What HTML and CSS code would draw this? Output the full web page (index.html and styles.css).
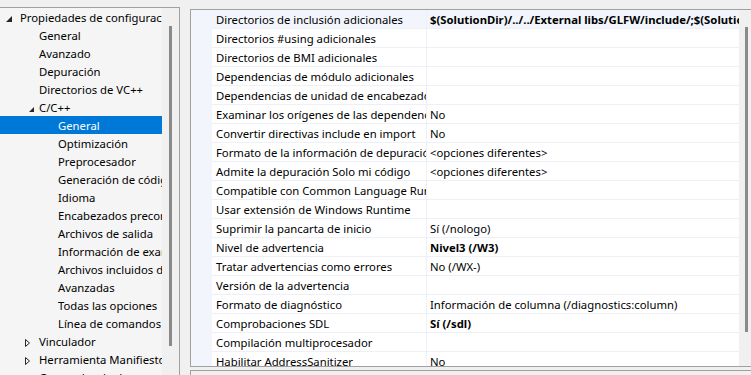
FILE: index.html
```html
<!DOCTYPE html>
<html lang="es">
<head>
    <meta charset="UTF-8">
    <meta name="viewport" content="width=device-width, initial-scale=1.0">
    <title>Páginas de propiedades</title>
    <link rel="stylesheet" href="styles.css">
</head>
<body>

<div class="dialog">
    <!-- arbol de categorias -->
    <div class="tree-pane">
        <ul class="tree">
            <li class="node lvl0"><svg class="tw-open big" viewBox="0 0 6 6"><polygon points="6,0 6,6 0,6"/></svg>Propiedades de configuración</li>
            <li class="node lvl1">General</li>
            <li class="node lvl1">Avanzado</li>
            <li class="node lvl1">Depuración</li>
            <li class="node lvl1">Directorios de VC++</li>
            <li class="node lvl1 open"><svg class="tw-open" viewBox="0 0 5 5"><polygon points="5,0 5,5 0,5"/></svg>C/C++</li>
            <li class="node lvl2 selected">General</li>
            <li class="node lvl2">Optimización</li>
            <li class="node lvl2">Preprocesador</li>
            <li class="node lvl2">Generación de código</li>
            <li class="node lvl2">Idioma</li>
            <li class="node lvl2">Encabezados precompilados</li>
            <li class="node lvl2">Archivos de salida</li>
            <li class="node lvl2">Información de examen</li>
            <li class="node lvl2">Archivos incluidos de referencia</li>
            <li class="node lvl2">Avanzadas</li>
            <li class="node lvl2">Todas las opciones</li>
            <li class="node lvl2">Línea de comandos</li>
            <li class="node lvl1 closed"><svg class="tw-closed" viewBox="0 0 5 8"><polygon points="0.5,0.5 4.5,4 0.5,7.5"/></svg>Vinculador</li>
            <li class="node lvl1 closed"><svg class="tw-closed" viewBox="0 0 5 8"><polygon points="0.5,0.5 4.5,4 0.5,7.5"/></svg>Herramienta Manifiesto</li>
            <li class="node lvl1 closed"><svg class="tw-closed" viewBox="0 0 5 8"><polygon points="0.5,0.5 4.5,4 0.5,7.5"/></svg>Generador de documentos XML</li>
        </ul>
        <div class="vscroll tree-scroll"><div class="thumb"></div></div>
    </div>

    <div class="right">
        <!-- cuadricula de propiedades -->
        <div class="grid-pane">
            <div class="props">
                <div class="row current"><div class="gutter"></div><div class="name">Directorios de inclusión adicionales</div><div class="value bold">$(SolutionDir)/../../External libs/GLFW/include/;$(SolutionDir)/../../External libs/GLEW/include</div></div>
                <div class="row"><div class="gutter"></div><div class="name">Directorios #using adicionales</div><div class="value"></div></div>
                <div class="row"><div class="gutter"></div><div class="name">Directorios de BMI adicionales</div><div class="value"></div></div>
                <div class="row"><div class="gutter"></div><div class="name">Dependencias de módulo adicionales</div><div class="value"></div></div>
                <div class="row"><div class="gutter"></div><div class="name">Dependencias de unidad de encabezado adicionales</div><div class="value"></div></div>
                <div class="row"><div class="gutter"></div><div class="name">Examinar los orígenes de las dependencias de módulo</div><div class="value">No</div></div>
                <div class="row"><div class="gutter"></div><div class="name">Convertir directivas include en import</div><div class="value">No</div></div>
                <div class="row"><div class="gutter"></div><div class="name">Formato de la información de depuración</div><div class="value">&lt;opciones diferentes&gt;</div></div>
                <div class="row"><div class="gutter"></div><div class="name">Admite la depuración Solo mi código</div><div class="value">&lt;opciones diferentes&gt;</div></div>
                <div class="row"><div class="gutter"></div><div class="name">Compatible con Common Language Runtime</div><div class="value"></div></div>
                <div class="row"><div class="gutter"></div><div class="name">Usar extensión de Windows Runtime</div><div class="value"></div></div>
                <div class="row"><div class="gutter"></div><div class="name">Suprimir la pancarta de inicio</div><div class="value">Sí (/nologo)</div></div>
                <div class="row"><div class="gutter"></div><div class="name">Nivel de advertencia</div><div class="value bold">Nivel3 (/W3)</div></div>
                <div class="row"><div class="gutter"></div><div class="name">Tratar advertencias como errores</div><div class="value">No (/WX-)</div></div>
                <div class="row"><div class="gutter"></div><div class="name">Versión de la advertencia</div><div class="value"></div></div>
                <div class="row"><div class="gutter"></div><div class="name">Formato de diagnóstico</div><div class="value">Información de columna (/diagnostics:column)</div></div>
                <div class="row"><div class="gutter"></div><div class="name">Comprobaciones SDL</div><div class="value bold">Sí (/sdl)</div></div>
                <div class="row"><div class="gutter"></div><div class="name">Compilación multiprocesador</div><div class="value"></div></div>
                <div class="row"><div class="gutter"></div><div class="name">Habilitar AddressSanitizer</div><div class="value">No</div></div>
            </div>
            <div class="vscroll grid-scroll"><div class="thumb"></div></div>
        </div>
        <div class="desc-pane"></div>
    </div>
</div>

</body>
</html>
```

FILE: styles.css
```css
html, body {
    margin: 0;
    height: 100%;
    overflow: hidden;
}
body {
    background-color: #f0f0f0;
    font-family: "Noto Sans", "Open Sans", sans-serif;
    font-size: 11.3px;
    color: #000;
}
.dialog {
    display: flex;
    align-items: flex-start;
    gap: 10px;
    padding-top: 7px;
    height: 368px;
}

/* tree */
.tree-pane {
    display: flex;
    width: 179px;
    height: 380px;
    border-top: 1px solid #a0a0a0;
    border-right: 1px solid #a0a0a0;
    background-color: #f0f0f0;
}
.tree {
    list-style: none;
    margin: 0;
    padding: 0;
    width: 162px;
    overflow: hidden;
    background-color: #f5f5f5;
}
.node {
    display: flex;
    align-items: center;
    box-sizing: border-box;
    height: 18px;
    padding-top: 1px;
    white-space: nowrap;
}
.lvl0 { padding-left: 6px; }
.lvl1 { padding-left: 39px; }
.lvl2 { padding-left: 58px; }
.lvl1.open { padding-left: 29px; }
.lvl1.closed { padding-left: 25px; }
.selected {
    background-color: #0078d7;
    color: #fff;
}
.tw-open {
    width: 5px;
    height: 5px;
    margin: 3px 5px 0 0;
    fill: #262626;
    flex: none;
}
.tw-open.big {
    width: 6px;
    height: 6px;
    margin-right: 8px;
}
.tw-closed {
    width: 5px;
    height: 8px;
    margin: 2px 9px 0 0;
    fill: none;
    stroke: #262626;
    stroke-width: 1;
    flex: none;
}

/* scrollbars */
.vscroll {
    flex: none;
    background-color: #f0f0f0;
}
.thumb {
    width: 3px;
    background-color: #8a8a8a;
}
.tree-scroll {
    width: 17px;
}
.tree-scroll .thumb {
    margin: 18px 0 0 7px;
    height: 320px;
}
.grid-scroll {
    width: 12px;
}
.grid-scroll .thumb {
    margin: 17px 0 0 6px;
    height: 305px;
}

/* property grid */
.right {
    flex: 1;
    display: flex;
    flex-direction: column;
    margin-top: 2px;
}
.grid-pane {
    display: flex;
    height: 356px;
    border: 1px solid #a0a0a0;
    border-right: none;
    background-color: #f2f6fc;
    overflow: hidden;
}
.props {
    flex: 1;
    min-width: 0;
}
.row {
    display: grid;
    grid-template-columns: 21px 215px 1fr;
    height: 19px;
}
.row > div {
    height: 18px;
    overflow: hidden;
    white-space: nowrap;
    line-height: 20px;
}
.name, .value {
    background-color: #fff;
    border-bottom: 1px solid #edf1f7;
}
.name {
    padding-left: 4px;
    border-right: 1px solid #edf1f7;
}
.value {
    padding-left: 3px;
}
.current .name, .current .value {
    background-color: #f2f6fc;
}
.bold {
    font-weight: bold;
}
.desc-pane {
    margin-top: 3px;
    height: 20px;
    border: 1px solid #a0a0a0;
    border-right: none;
    background-color: #f0f0f0;
}
```
